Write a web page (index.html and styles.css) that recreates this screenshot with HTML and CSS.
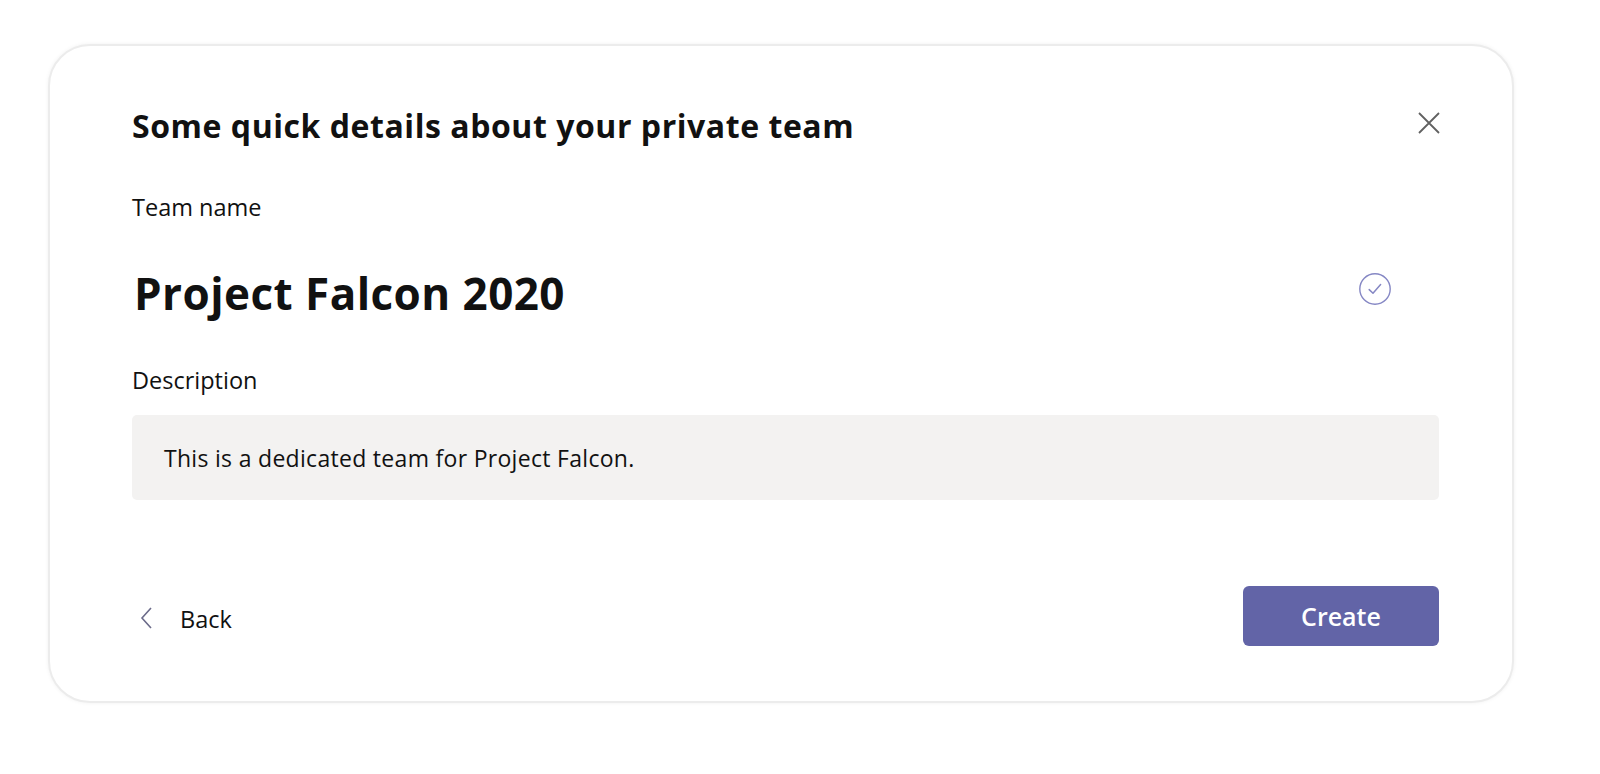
FILE: index.html
```html
<!DOCTYPE html>
<html>
<head>
<meta charset="utf-8">
<link rel="stylesheet" href="styles.css">
</head>
<body>
<div class="page">
  <div class="card">
    <div class="header">
      <h1 class="title">Some quick details about your private team</h1>
      <button class="close" aria-label="Close">
        <svg width="22" height="22" viewBox="0 0 22 22"><path d="M1 1 L21 21 M21 1 L1 21" stroke="#616161" stroke-width="1.8" fill="none"/></svg>
      </button>
    </div>
    <div class="label label-name">Team name</div>
    <div class="name-row">
      <div class="name">Project Falcon 2020</div>
      <svg class="check" width="34" height="34" viewBox="0 0 34 34"><circle cx="17" cy="17" r="15.2" stroke="#8587c4" stroke-width="1.4" fill="none"/><path d="M11.2 17.6 L15 21.2 L22.6 12.6" stroke="#8587c4" stroke-width="1.5" fill="none" stroke-linecap="round" stroke-linejoin="round"/></svg>
    </div>
    <div class="label label-desc">Description</div>
    <div class="desc">This is a dedicated team for Project Falcon.</div>
    <div class="footer">
      <div class="back">
        <svg width="14" height="22" viewBox="0 0 14 22"><path d="M11 1 L2 11 L11 21" stroke="#6b6b8a" stroke-width="1.6" fill="none"/></svg>
        <span>Back</span>
      </div>
      <button class="create">Create</button>
    </div>
  </div>
</div>
</body>
</html>
```
FILE: styles.css
```css
* { box-sizing: border-box; }
html, body { margin: 0; padding: 0; background: #ffffff; }
body { font-family: "Open Sans", "Noto Sans", sans-serif; color: #111; width: 1600px; height: 774px; overflow: hidden; }
.page { padding: 44px 0 0 48px; }
.card {
  width: 1466px;
  height: 659px;
  border: 2px solid #ececec;
  box-shadow: 0 0 4px rgba(0,0,0,0.06);
  border-radius: 42px;
  background: #fff;
  padding: 60px 73px 0 82px;
}
.header { display: flex; justify-content: space-between; align-items: flex-start; }
.title { margin: 0; font-size: 32px; font-weight: 700; line-height: 40px; letter-spacing: 0.55px; }
.close { border: 0; background: none; padding: 0; margin: 6px -1px 0 0; width: 22px; height: 22px; }
.label { font-size: 23.5px; line-height: 28px; }
.label-name { margin-top: 47px; }
.name-row { display: flex; justify-content: space-between; align-items: center; margin-top: 44px; padding-right: 47px; }
.name { font-size: 44px; font-weight: 700; line-height: 56px; letter-spacing: 0.45px; margin-left: 2px; }
.check { margin-top: -8px; }
.label-desc { margin-top: 45px; }
.desc {
  margin-top: 21px;
  background: #f3f2f1;
  border-radius: 5px;
  height: 85px;
  padding: 0 32px;
  display: flex;
  align-items: center;
  font-size: 23px;
  letter-spacing: 0.3px;
}
.footer { display: flex; justify-content: space-between; align-items: center; margin-top: 86px; }
.back { display: flex; align-items: center; gap: 26px; padding-left: 8px; padding-top: 6px; font-size: 23.5px; }
.back svg { margin-top: -2px; }
.create {
  border: 0;
  background: #6264a7;
  color: #fff;
  font-family: inherit;
  font-size: 25px;
  font-weight: 600;
  width: 196px;
  height: 60px;
  border-radius: 6px;
}
```
